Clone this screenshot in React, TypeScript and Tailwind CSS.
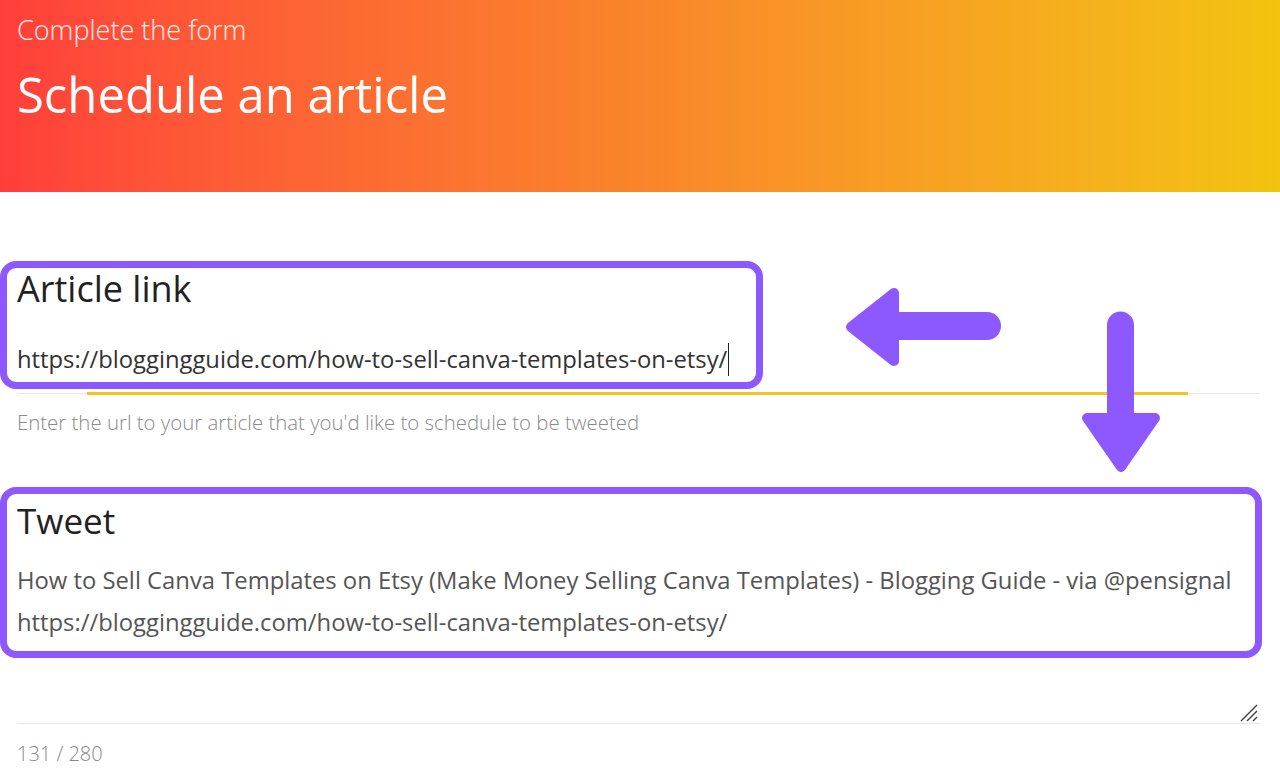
export default function App() {
  const purple = "#8e58ff";
  return (
    <div className="relative h-[777px] w-[1280px] overflow-hidden bg-white font-['Open_Sans',sans-serif]">
      <header className="h-[192px] bg-linear-to-r from-[#ff3e3a] via-[#f9852a] to-[#f2c30f] px-[17px] pt-[12px] text-white">
        <div className="text-[27px] leading-[36px] font-light text-white/90">Complete the form</div>
        <h1 className="mt-[13px] text-[49px] leading-[66px] font-normal">Schedule an article</h1>
      </header>

      <main className="pl-[17px] pr-[20px] pt-[74px]">
        {/* Article link field */}
        <div className="relative">
          <div className="pointer-events-none absolute left-[-17px] top-[-5px] z-10 h-[128px] w-[763px] rounded-[16px] border-[7px] border-[#8e58ff]" />
          <div className="text-[36px] leading-[46px] text-[#222]">Article link</div>
          <div className="relative mt-[31px] border-b border-[#e8e8e8] pb-[17px]">
            <div className="whitespace-nowrap text-[23.8px] leading-[32px] text-[#333]">
              https://bloggingguide.com/how-to-sell-canva-templates-on-etsy/
              <span className="ml-[1px] inline-block h-[33px] w-0 border-l border-[#222] align-[-8px]" />
            </div>
            <div className="absolute bottom-[-2px] left-[70px] h-[3px] w-[1101px] bg-[#f4c518]" />
          </div>
        </div>
        <div className="mt-[15px] text-[20.4px] leading-[26px] font-light text-[#8a8a8a]">
          Enter the url to your article that you'd like to schedule to be tweeted
        </div>

        {/* Tweet field */}
        <div className="relative mt-[63px]">
          <div className="pointer-events-none absolute left-[-17px] top-[-11px] z-10 h-[171px] w-[1262px] rounded-[16px] border-[7px] border-[#8e58ff]" />
          <div className="text-[35px] leading-[46px] text-[#222]">Tweet</div>
          <div className="relative mt-[15px] border-b border-[#e8e8e8] pb-[80px] text-[23.8px] leading-[42px] text-[#555]">
            <div className="whitespace-nowrap">
              How to Sell Canva Templates on Etsy (Make Money Selling Canva Templates) - Blogging Guide - via @pensignal
            </div>
            <div className="whitespace-nowrap">https://bloggingguide.com/how-to-sell-canva-templates-on-etsy/</div>
            <svg className="absolute bottom-[1px] right-[2px]" width="20" height="20" viewBox="0 0 20 20">
              <line x1="19" y1="3" x2="3" y2="19" stroke="#444" strokeWidth="1.4" />
              <line x1="19" y1="9" x2="9" y2="19" stroke="#444" strokeWidth="1.4" />
              <line x1="19" y1="15" x2="15" y2="19" stroke="#444" strokeWidth="1.4" />
            </svg>
          </div>
        </div>
        <div className="mt-[16px] text-[20px] leading-[28px] font-light text-[#8a8a8a]">131 / 280</div>
      </main>

      {/* Annotation arrows */}
      <svg className="pointer-events-none absolute left-0 top-0" width="1280" height="777" viewBox="0 0 1280 777">
        <line x1="899" y1="326" x2="987" y2="326" stroke={purple} strokeWidth="28" strokeLinecap="round" />
        <polygon points="851,327 894,293 894,361" fill={purple} stroke={purple} strokeWidth="10" strokeLinejoin="round" />
        <line x1="1120.5" y1="325" x2="1120.5" y2="422" stroke={purple} strokeWidth="27" strokeLinecap="round" />
        <polygon points="1087,418 1155,418 1121,467" fill={purple} stroke={purple} strokeWidth="10" strokeLinejoin="round" />
      </svg>
    </div>
  );
}
